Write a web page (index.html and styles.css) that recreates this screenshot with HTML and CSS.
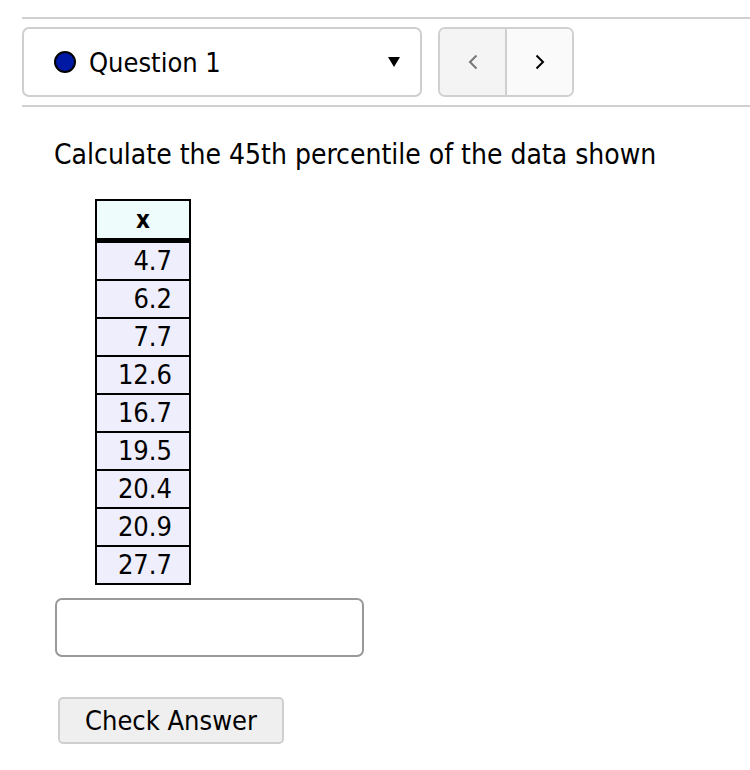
FILE: index.html
```html
<!DOCTYPE html>
<html>
<head>
<meta charset="utf-8">
<link rel="stylesheet" href="styles.css">
</head>
<body>
<div class="page">
  <div class="rule"></div>
  <div class="nav">
    <div class="select">
      <span class="dot"></span>
      <span class="qlabel">Question 1</span>
      <span class="caret"></span>
    </div>
    <div class="arrows">
      <div class="arrow prev"><svg width="14" height="20" viewBox="0 0 14 20"><path d="M10.5 3.5 L4 10 L10.5 16.5" fill="none" stroke="#777" stroke-width="2"/></svg></div>
      <div class="arrow next"><svg width="14" height="20" viewBox="0 0 14 20"><path d="M3.5 3.5 L10 10 L3.5 16.5" fill="none" stroke="#000" stroke-width="2"/></svg></div>
    </div>
  </div>
  <div class="rule"></div>
  <p class="question">Calculate the 45th percentile of the data shown</p>
  <table class="data">
    <thead><tr><th>x</th></tr></thead>
    <tbody>
      <tr><td>4.7</td></tr>
      <tr><td>6.2</td></tr>
      <tr><td>7.7</td></tr>
      <tr><td>12.6</td></tr>
      <tr><td>16.7</td></tr>
      <tr><td>19.5</td></tr>
      <tr><td>20.4</td></tr>
      <tr><td>20.9</td></tr>
      <tr><td>27.7</td></tr>
    </tbody>
  </table>
  <div class="answer"></div>
  <div class="check">Check Answer</div>
</div>
</body>
</html>
```
FILE: styles.css
```css
html, body {
  margin: 0;
  padding: 0;
  background: #fff;
}
body {
  font-family: "DejaVu Sans Condensed", "DejaVu Sans", sans-serif;
  color: #000;
}
.page {
  padding: 17px 0 0 22px;
}
.rule {
  height: 2px;
  background: #d0d0d0;
}
.nav {
  display: flex;
  align-items: center;
  gap: 16px;
  padding: 8px 0 8px 0;
}
.select {
  box-sizing: border-box;
  width: 400px;
  height: 70px;
  border: 2px solid #cfcfcf;
  border-radius: 7px;
  display: flex;
  align-items: center;
  padding-left: 30px;
  padding-right: 20px;
}
.dot {
  width: 18px;
  height: 18px;
  border-radius: 50%;
  background: #0019a5;
  border: 2px solid #000;
  margin-right: 13px;
}
.qlabel {
  font-size: 27px;
  flex: 1;
}
.caret {
  width: 0;
  height: 0;
  border-left: 6px solid transparent;
  border-right: 6px solid transparent;
  border-top: 10px solid #000;
}
.arrows {
  box-sizing: border-box;
  height: 70px;
  width: 136px;
  display: flex;
  border: 2px solid #d0d0d0;
  border-radius: 7px;
  overflow: hidden;
}
.arrow {
  flex: 1;
  display: flex;
  align-items: center;
  justify-content: center;
}
.prev {
  background: #f4f4f4;
  border-right: 2px solid #cfcfcf;
}
.next {
  background: #fafafa;
}
.question {
  margin: 32px 0 0 32px;
  font-size: 28px;
  line-height: 32px;
}
.data {
  margin: 28px 0 0 73px;
  border-collapse: collapse;
  width: 96px;
  font-size: 27px;
}
.data th {
  height: 37px;
  background: #eefcfc;
  border: 2px solid #000;
  border-bottom: 5px solid #000;
  font-weight: bold;
  padding: 0;
  font-size: 24px;
}
.data td {
  height: 36px;
  background: #eeeefc;
  border: 2px solid #000;
  text-align: right;
  padding: 0 17px 0 0;
  line-height: 30px;
}
.answer {
  box-sizing: border-box;
  margin: 13px 0 0 33px;
  width: 309px;
  height: 59px;
  border: 2px solid #999;
  border-radius: 7px;
}
.check {
  box-sizing: border-box;
  margin: 40px 0 0 36px;
  width: 226px;
  height: 47px;
  background: #efefef;
  border: 2px solid #cfcfcf;
  border-radius: 5px;
  font-size: 27px;
  display: flex;
  align-items: center;
  justify-content: center;
}
```
